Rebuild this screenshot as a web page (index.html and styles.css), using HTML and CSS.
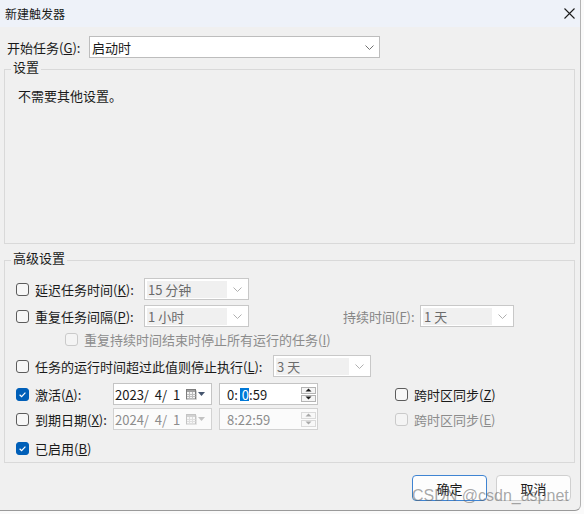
FILE: index.html
```html
<!DOCTYPE html>
<html lang="zh-CN">
<head>
<meta charset="utf-8">
<title>新建触发器</title>
<link rel="stylesheet" href="styles.css">
</head>
<body>
<div class="window">
  <div class="titlebar">
    <span class="title">新建触发器</span>
    <svg class="close" width="11" height="11" viewBox="0 0 11 11"><path d="M0.5 0.5L10.5 10.5M10.5 0.5L0.5 10.5" stroke="#1c1c1c" stroke-width="1.1" fill="none"/></svg>
  </div>
  <div class="content">
    <div class="start-row">
      <span class="start-label">开始任务(<u>G</u>):</span>
      <div class="combo start-combo">
        <span class="val">启动时</span>
        <svg class="chev" width="9" height="5" viewBox="0 0 9 5"><path d="M0.5 0.5L4.5 4.5L8.5 0.5" stroke="#707070" fill="none"/></svg>
      </div>
    </div>

    <fieldset class="group settings">
      <legend>设置</legend>
      <p class="note">不需要其他设置。</p>
    </fieldset>

    <fieldset class="group advanced">
      <legend>高级设置</legend>
      <div class="adv-body">
        <div class="row r1">
          <span class="cb"></span>
          <span class="lbl w109">延迟任务时间(<u>K</u>):</span>
          <div class="combo dis w105">
            <span class="val">15 分钟</span>
            <svg class="chev" width="9" height="5" viewBox="0 0 9 5"><path d="M0.5 0.5L4.5 4.5L8.5 0.5" stroke="#b0b0b0" fill="none"/></svg>
          </div>
        </div>
        <div class="row r2">
          <span class="cb"></span>
          <span class="lbl w109">重复任务间隔(<u>P</u>):</span>
          <div class="combo dis w105">
            <span class="val">1 小时</span>
            <svg class="chev" width="9" height="5" viewBox="0 0 9 5"><path d="M0.5 0.5L4.5 4.5L8.5 0.5" stroke="#b0b0b0" fill="none"/></svg>
          </div>
          <span class="dur-lbl">持续时间(<u>F</u>):</span>
          <div class="combo dis w94">
            <span class="val">1 天</span>
            <svg class="chev" width="9" height="5" viewBox="0 0 9 5"><path d="M0.5 0.5L4.5 4.5L8.5 0.5" stroke="#b0b0b0" fill="none"/></svg>
          </div>
        </div>
        <div class="row r3">
          <span class="cb dis sub-cb"></span>
          <span class="lbl gray">重复持续时间结束时停止所有运行的任务(<u>I</u>)</span>
        </div>
        <div class="row r4">
          <span class="cb"></span>
          <span class="lbl w238">任务的运行时间超过此值则停止执行(<u>L</u>):</span>
          <div class="combo dis w98">
            <span class="val">3 天</span>
            <svg class="chev" width="9" height="5" viewBox="0 0 9 5"><path d="M0.5 0.5L4.5 4.5L8.5 0.5" stroke="#b0b0b0" fill="none"/></svg>
          </div>
        </div>
        <div class="row r5">
          <span class="cb on"><svg width="11" height="11" viewBox="0 0 11 11"><path d="M2.6 5.8L4.6 7.7L8.4 3.6" stroke="#fff" stroke-width="1.2" fill="none"/></svg></span>
          <span class="lbl w78">激活(<u>A</u>):</span>
          <div class="date">
            <span class="dtext">2023/  4/  1</span>
            <svg class="cal" width="11" height="11" viewBox="0 0 11 11"><rect x="0.5" y="0.5" width="9" height="9.5" fill="#f4f4f4" stroke="#7c7c7c"/><rect x="1" y="1" width="8" height="2" fill="#a0a0a0"/><path d="M1 5.5H9.5M1 7.5H9.5M3.5 3V10M6.5 3V10" stroke="#bdbdbd" fill="none"/><path d="M10.5 1.5V10.5H1.5" stroke="#cfcfcf" fill="none"/></svg>
            <svg class="dd" width="7" height="4" viewBox="0 0 7 4"><polygon points="0,0 7,0 3.5,4" fill="#45556e"/></svg>
          </div>
          <div class="time">
            <span>0:</span><span class="sel">0</span><span>:59</span>
            <div class="spin">
              <span class="sbtn"><svg width="7" height="4" viewBox="0 0 7 4"><polygon points="0.5,3.5 6.5,3.5 3.5,0.5" fill="#1a1a1a"/></svg></span>
              <span class="sbtn"><svg width="7" height="4" viewBox="0 0 7 4"><polygon points="0.5,0.5 6.5,0.5 3.5,3.5" fill="#1a1a1a"/></svg></span>
            </div>
          </div>
          <span class="cb tz-cb"></span>
          <span class="lbl">跨时区同步(<u>Z</u>)</span>
        </div>
        <div class="row r6">
          <span class="cb"></span>
          <span class="lbl w78">到期日期(<u>X</u>):</span>
          <div class="date dis">
            <span class="dtext">2024/  4/  1</span>
            <svg class="cal" width="11" height="11" viewBox="0 0 11 11"><rect x="0.5" y="0.5" width="9" height="9.5" fill="#f7f7f7" stroke="#c4c4c4"/><rect x="1" y="1" width="8" height="2" fill="#d2d2d2"/><path d="M1 5.5H9.5M1 7.5H9.5M3.5 3V10M6.5 3V10" stroke="#dedede" fill="none"/><path d="M10.5 1.5V10.5H1.5" stroke="#e2e2e2" fill="none"/></svg>
            <svg class="dd" width="7" height="4" viewBox="0 0 7 4"><polygon points="0,0 7,0 3.5,4" fill="#c3c3c3"/></svg>
          </div>
          <div class="time dis">
            <span>8:22:59</span>
            <div class="spin">
              <span class="sbtn"><svg width="7" height="4" viewBox="0 0 7 4"><polygon points="0.5,3.5 6.5,3.5 3.5,0.5" fill="#a8a8a8"/></svg></span>
              <span class="sbtn"><svg width="7" height="4" viewBox="0 0 7 4"><polygon points="0.5,0.5 6.5,0.5 3.5,3.5" fill="#a8a8a8"/></svg></span>
            </div>
          </div>
          <span class="cb dis tz-cb"></span>
          <span class="lbl gray">跨时区同步(<u>E</u>)</span>
        </div>
        <div class="row r7">
          <span class="cb on"><svg width="11" height="11" viewBox="0 0 11 11"><path d="M2.6 5.8L4.6 7.7L8.4 3.6" stroke="#fff" stroke-width="1.2" fill="none"/></svg></span>
          <span class="lbl">已启用(<u>B</u>)</span>
        </div>
      </div>
    </fieldset>

    <div class="buttons">
      <button class="btn default">确定</button>
      <button class="btn">取消</button>
    </div>
  </div>
  <div class="watermark">CSDN @csdn_aspnet</div>
</div>
</body>
</html>
```
FILE: styles.css
```css
* { box-sizing: border-box; }
html, body { margin: 0; padding: 0; }
body {
  width: 584px;
  height: 514px;
  overflow: hidden;
  background: #fafafa;
  font-family: "Noto Sans CJK SC", "Noto Sans", sans-serif;
  font-size: 13px;
  line-height: 17px;
  color: #1a1a1a;
}
u { text-decoration: underline; text-underline-offset: 1px; text-decoration-thickness: 1px; }

.window {
  position: relative;
  width: 581px;
  height: 511px;
  background: #f0f0f0;
  border-right: 1px solid #b3b3b3;
  border-bottom: 1px solid #9a9a9a;
  border-bottom-right-radius: 6px;
  overflow: hidden;
}

.titlebar {
  height: 27px;
  background: #eef2f9;
  display: flex;
  align-items: center;
  justify-content: space-between;
  padding: 0 5px;
}
.title { font-size: 12px; color: #1a1a1a; }
.close { display: block; }

.content { display: flex; flex-direction: column; }

.start-row {
  display: flex;
  align-items: center;
  height: 22px;
  margin-top: 9px;
  padding-left: 7px;
}
.start-label { width: 82px; flex: none; }
.start-combo { width: 291px; }

.combo {
  display: flex;
  align-items: center;
  height: 22px;
  background: #fff;
  border: 1px solid #bdbdbd;
  flex: none;
}
.combo .val { flex: 1; padding-left: 2px; }
.combo .chev { flex: none; margin: 0 5px 0 6px; display: block; }
.combo.dis { border-color: #c8c8c8; }
.combo.dis .val {
  align-self: flex-start;
  margin: 2px 0 0 2px;
  height: 17px;
  line-height: 17px;
  background: #f0f0f0;
  color: #6b6b6b;
  padding-left: 1px;
}
.combo.dis .chev { margin: 0 6px 0 6px; }
.w105 { width: 105px; }
.w98 { width: 98px; }
.w94 { width: 94px; }

.group {
  margin: 0 0 0 4px;
  padding: 0;
  border: 1px solid #d9d9d9;
  width: 571px;
  min-width: 0;
}
.group legend {
  margin-left: 6px;
  padding: 0 2px 6px 2px;
  line-height: 17px;
  font-size: 13px;
}
.settings { margin-top: 0; height: 186px; }
.note { margin: 6px 0 0 13px; }
.advanced { margin-top: 5px; height: 214px; }
.adv-body { padding-left: 11px; }

.row { display: flex; align-items: center; height: 22px; }
.r1 { margin-top: 6px; }
.r2 { margin-top: 5px; }
.r3 { margin-top: 1px; }
.r4 { margin-top: 5px; }
.r5 { margin-top: 6px; }
.r6 { margin-top: 3px; }
.r7 { margin-top: 7px; }

.cb {
  width: 13px;
  height: 13px;
  flex: none;
  border: 1px solid #5c5c5c;
  border-radius: 3px;
  background: #f7f7f7;
  display: flex;
  align-items: center;
  justify-content: center;
}
.cb svg { display: block; }
.cb.on { background: #005fb8; border-color: #005fb8; }
.cb.dis { border-color: #cacaca; background: #f4f4f4; }
.sub-cb { margin-left: 49px; }
.tz-cb { margin-left: 77px; }

.lbl { margin-left: 6px; flex: none; white-space: nowrap; }
.gray { color: #8c8c8c; }
.w109 { width: 109px; }
.w238 { width: 238px; }
.w78 { width: 78px; }
.dur-lbl { margin-left: 94px; width: 77px; flex: none; color: #868686; white-space: nowrap; }

.date {
  width: 99px;
  height: 22px;
  flex: none;
  display: flex;
  align-items: center;
  background: #fff;
  border: 1px solid #c4c4c4;
  padding-left: 1px;
}
.dtext { white-space: pre; }
.date .cal { display: block; margin-left: auto; }
.date .dd { display: block; margin: 0 6px 0 1px; }
.date.dis { background: #fbfbfb; border-color: #d2d2d2; color: #8c8c8c; }

.time {
  width: 99px;
  height: 22px;
  margin-left: 7px;
  flex: none;
  display: flex;
  align-items: center;
  background: #fff;
  border: 1px solid #c4c4c4;
  padding-left: 7px;
}
.time .sel {
  display: inline-block;
  height: 13px;
  line-height: 13px;
  margin-left: 2px;
  padding-left: 2px;
  background: #0078d7;
  color: #fff;
}
.time.dis { background: #fbfbfb; border-color: #d2d2d2; color: #8c8c8c; }
.spin {
  margin-left: auto;
  margin-right: 1px;
  display: flex;
  flex-direction: column;
  gap: 1px;
}
.sbtn {
  width: 15px;
  height: 7px;
  border: 1px solid #b4b4b4;
  background: #f5f5f5;
  display: flex;
  align-items: center;
  justify-content: center;
}
.sbtn svg { display: block; }
.time.dis .sbtn { border-color: #dadada; background: #f8f8f8; }

.buttons {
  display: flex;
  gap: 9px;
  margin-top: 12px;
  padding-left: 412px;
}
.btn {
  width: 75px;
  height: 26px;
  padding: 0;
  font: inherit;
  color: #1a1a1a;
  background: #fdfdfd;
  border: 1px solid #d0d0d0;
  border-radius: 4px;
}
.btn.default { border-color: #3f84d2; }

.watermark {
  position: absolute;
  left: 412px;
  top: 487px;
  font-family: "Liberation Sans", Arial, sans-serif;
  font-size: 16px;
  line-height: 18px;
  color: rgba(95, 95, 95, 0.55);
  white-space: nowrap;
}
```
